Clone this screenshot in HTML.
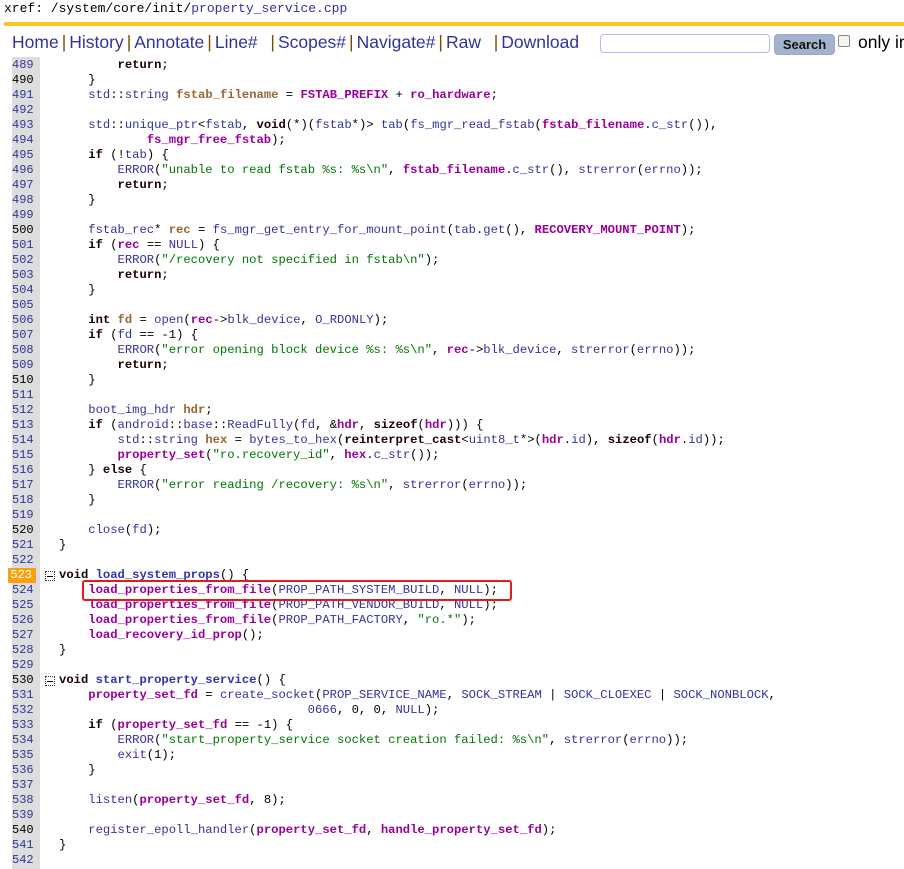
<!DOCTYPE html>
<html><head><meta charset="utf-8"><style>
body{margin:0;background:#fff;width:904px;height:869px;overflow:hidden;position:relative;font-family:"Liberation Mono",monospace}
#hdr{position:absolute;left:4px;top:1px;font-size:13px;color:#000}
#hdr a{color:#333399;text-decoration:none}
#bar{position:absolute;left:4px;top:22px;width:900px;height:4px;background:#f9c21f}
#nav{position:absolute;left:12px;top:32px;font-family:"Liberation Sans","Noto Sans CJK SC",sans-serif;font-size:17.5px;color:#333399;white-space:nowrap}
#nav b{font-weight:normal;color:#7a4a00;margin:0 3px}
#sbox{position:absolute;left:600px;top:34px;width:168px;height:17px;border:1px solid #b8b8ff;border-radius:4px;background:#fff}
#sbtn{position:absolute;left:774px;top:34px;width:59px;height:19px;background:#a3b3cc;border:1px solid #9aa8d8;border-radius:4px;font:bold 13px "Liberation Sans",sans-serif;text-align:center;line-height:19px;color:#111}
#chk{position:absolute;left:838px;top:35px;width:10px;height:10px;border:1px solid #888;border-radius:2px;background:#f4f4f4}
#only{position:absolute;left:858px;top:32px;font:17.5px "Liberation Sans",sans-serif;color:#000;white-space:nowrap}
#gut{position:absolute;left:12px;top:57px;width:28px;height:812px;background:#dddddd}
#code{position:absolute;left:0;top:58px;width:904px}
.l{position:relative;height:15px;line-height:15px;font-size:12.2px}
.n{position:absolute;left:12px;width:21px;text-align:right;color:#333399;font-size:12px}
.n.x{color:#000}
.n.h{background:#f7a010;color:#ffe;width:24px;padding-right:4px;left:8px}
.c{position:absolute;left:59px;white-space:pre;color:#000}
.k{font-weight:bold;color:#1a0000}
.b{color:#333399}
.p{color:#990099;font-weight:bold}
.r{color:#996633;font-weight:bold}
.s{color:#007700}
.fb{color:#3333aa;font-weight:bold}
.f{position:absolute;left:45px;top:3px;width:8px;height:8px;border:1px dotted #333}
.f:after{content:"";position:absolute;left:1px;right:1px;top:3.5px;height:1px;background:#000}
#box{position:absolute;left:82px;top:580px;width:426px;height:17px;border:2px solid #e8191a;border-radius:3px}
</style></head><body>
<div id="hdr">xref: /system/core/init/<a>property_service.cpp</a></div>
<div id="bar"></div>
<div id="nav">Home<b>|</b>History<b>|</b>Annotate<b>|</b>Line#&nbsp;&nbsp;<b>|</b>Scopes#<b>|</b>Navigate#<b>|</b>Raw&nbsp;&nbsp;<b>|</b>Download</div>
<div id="sbox"></div><div id="sbtn">Search</div><div id="chk"></div><div id="only">only in</div>
<div id="gut"></div>
<div id="code">
<div class="l"><span class="n">489</span><span class="c">        <span class="k">return</span>;</span></div>
<div class="l"><span class="n x">490</span><span class="c">    }</span></div>
<div class="l"><span class="n">491</span><span class="c">    <span class="b">std</span>::<span class="b">string</span> <span class="r">fstab_filename</span> = <span class="p">FSTAB_PREFIX</span> + <span class="p">ro_hardware</span>;</span></div>
<div class="l"><span class="n">492</span><span class="c"></span></div>
<div class="l"><span class="n">493</span><span class="c">    <span class="b">std</span>::<span class="b">unique_ptr</span>&lt;<span class="b">fstab</span>, <span class="k">void</span>(*)(<span class="b">fstab</span>*)&gt; <span class="b">tab</span>(<span class="b">fs_mgr_read_fstab</span>(<span class="p">fstab_filename</span>.<span class="b">c_str</span>()),</span></div>
<div class="l"><span class="n">494</span><span class="c">            <span class="p">fs_mgr_free_fstab</span>);</span></div>
<div class="l"><span class="n">495</span><span class="c">    <span class="k">if</span> (!<span class="b">tab</span>) {</span></div>
<div class="l"><span class="n">496</span><span class="c">        <span class="b">ERROR</span>(<span class="s">"unable to read fstab %s: %s\n"</span>, <span class="p">fstab_filename</span>.<span class="b">c_str</span>(), <span class="b">strerror</span>(<span class="b">errno</span>));</span></div>
<div class="l"><span class="n">497</span><span class="c">        <span class="k">return</span>;</span></div>
<div class="l"><span class="n">498</span><span class="c">    }</span></div>
<div class="l"><span class="n">499</span><span class="c"></span></div>
<div class="l"><span class="n x">500</span><span class="c">    <span class="b">fstab_rec</span>* <span class="r">rec</span> = <span class="b">fs_mgr_get_entry_for_mount_point</span>(<span class="b">tab</span>.<span class="b">get</span>(), <span class="p">RECOVERY_MOUNT_POINT</span>);</span></div>
<div class="l"><span class="n">501</span><span class="c">    <span class="k">if</span> (<span class="p">rec</span> == <span class="b">NULL</span>) {</span></div>
<div class="l"><span class="n">502</span><span class="c">        <span class="b">ERROR</span>(<span class="s">"/recovery not specified in fstab\n"</span>);</span></div>
<div class="l"><span class="n">503</span><span class="c">        <span class="k">return</span>;</span></div>
<div class="l"><span class="n">504</span><span class="c">    }</span></div>
<div class="l"><span class="n">505</span><span class="c"></span></div>
<div class="l"><span class="n">506</span><span class="c">    <span class="k">int</span> <span class="r">fd</span> = <span class="b">open</span>(<span class="p">rec</span>-&gt;<span class="b">blk_device</span>, <span class="b">O_RDONLY</span>);</span></div>
<div class="l"><span class="n">507</span><span class="c">    <span class="k">if</span> (<span class="b">fd</span> == -1) {</span></div>
<div class="l"><span class="n">508</span><span class="c">        <span class="b">ERROR</span>(<span class="s">"error opening block device %s: %s\n"</span>, <span class="p">rec</span>-&gt;<span class="b">blk_device</span>, <span class="b">strerror</span>(<span class="b">errno</span>));</span></div>
<div class="l"><span class="n">509</span><span class="c">        <span class="k">return</span>;</span></div>
<div class="l"><span class="n x">510</span><span class="c">    }</span></div>
<div class="l"><span class="n">511</span><span class="c"></span></div>
<div class="l"><span class="n">512</span><span class="c">    <span class="b">boot_img_hdr</span> <span class="r">hdr</span>;</span></div>
<div class="l"><span class="n">513</span><span class="c">    <span class="k">if</span> (<span class="b">android</span>::<span class="b">base</span>::<span class="b">ReadFully</span>(<span class="b">fd</span>, &amp;<span class="p">hdr</span>, <span class="k">sizeof</span>(<span class="p">hdr</span>))) {</span></div>
<div class="l"><span class="n">514</span><span class="c">        <span class="b">std</span>::<span class="b">string</span> <span class="r">hex</span> = <span class="b">bytes_to_hex</span>(<span class="k">reinterpret_cast</span>&lt;<span class="b">uint8_t</span>*&gt;(<span class="p">hdr</span>.<span class="b">id</span>), <span class="k">sizeof</span>(<span class="p">hdr</span>.<span class="b">id</span>));</span></div>
<div class="l"><span class="n">515</span><span class="c">        <span class="p">property_set</span>(<span class="s">"ro.recovery_id"</span>, <span class="p">hex</span>.<span class="b">c_str</span>());</span></div>
<div class="l"><span class="n">516</span><span class="c">    } <span class="k">else</span> {</span></div>
<div class="l"><span class="n">517</span><span class="c">        <span class="b">ERROR</span>(<span class="s">"error reading /recovery: %s\n"</span>, <span class="b">strerror</span>(<span class="b">errno</span>));</span></div>
<div class="l"><span class="n">518</span><span class="c">    }</span></div>
<div class="l"><span class="n">519</span><span class="c"></span></div>
<div class="l"><span class="n x">520</span><span class="c">    <span class="b">close</span>(<span class="b">fd</span>);</span></div>
<div class="l"><span class="n">521</span><span class="c">}</span></div>
<div class="l"><span class="n">522</span><span class="c"></span></div>
<div class="l"><span class="n h">523</span><span class="f"></span><span class="c"><span class="k">void</span> <span class="fb">load_system_props</span>() {</span></div>
<div class="l"><span class="n">524</span><span class="c">    <span class="p">load_properties_from_file</span>(<span class="b">PROP_PATH_SYSTEM_BUILD</span>, <span class="b">NULL</span>);</span></div>
<div class="l"><span class="n">525</span><span class="c">    <span class="p">load_properties_from_file</span>(<span class="b">PROP_PATH_VENDOR_BUILD</span>, <span class="b">NULL</span>);</span></div>
<div class="l"><span class="n">526</span><span class="c">    <span class="p">load_properties_from_file</span>(<span class="b">PROP_PATH_FACTORY</span>, <span class="s">"ro.*"</span>);</span></div>
<div class="l"><span class="n">527</span><span class="c">    <span class="p">load_recovery_id_prop</span>();</span></div>
<div class="l"><span class="n">528</span><span class="c">}</span></div>
<div class="l"><span class="n">529</span><span class="c"></span></div>
<div class="l"><span class="n x">530</span><span class="f"></span><span class="c"><span class="k">void</span> <span class="fb">start_property_service</span>() {</span></div>
<div class="l"><span class="n">531</span><span class="c">    <span class="p">property_set_fd</span> = <span class="b">create_socket</span>(<span class="b">PROP_SERVICE_NAME</span>, <span class="b">SOCK_STREAM</span> | <span class="b">SOCK_CLOEXEC</span> | <span class="b">SOCK_NONBLOCK</span>,</span></div>
<div class="l"><span class="n">532</span><span class="c">                                  <span class="b">0666</span>, 0, 0, <span class="b">NULL</span>);</span></div>
<div class="l"><span class="n">533</span><span class="c">    <span class="k">if</span> (<span class="p">property_set_fd</span> == -1) {</span></div>
<div class="l"><span class="n">534</span><span class="c">        <span class="b">ERROR</span>(<span class="s">"start_property_service socket creation failed: %s\n"</span>, <span class="b">strerror</span>(<span class="b">errno</span>));</span></div>
<div class="l"><span class="n">535</span><span class="c">        <span class="b">exit</span>(1);</span></div>
<div class="l"><span class="n">536</span><span class="c">    }</span></div>
<div class="l"><span class="n">537</span><span class="c"></span></div>
<div class="l"><span class="n">538</span><span class="c">    <span class="b">listen</span>(<span class="p">property_set_fd</span>, 8);</span></div>
<div class="l"><span class="n">539</span><span class="c"></span></div>
<div class="l"><span class="n x">540</span><span class="c">    <span class="b">register_epoll_handler</span>(<span class="p">property_set_fd</span>, <span class="p">handle_property_set_fd</span>);</span></div>
<div class="l"><span class="n">541</span><span class="c">}</span></div>
<div class="l"><span class="n">542</span><span class="c"></span></div>
</div>
<div id="box"></div>
</body></html>
